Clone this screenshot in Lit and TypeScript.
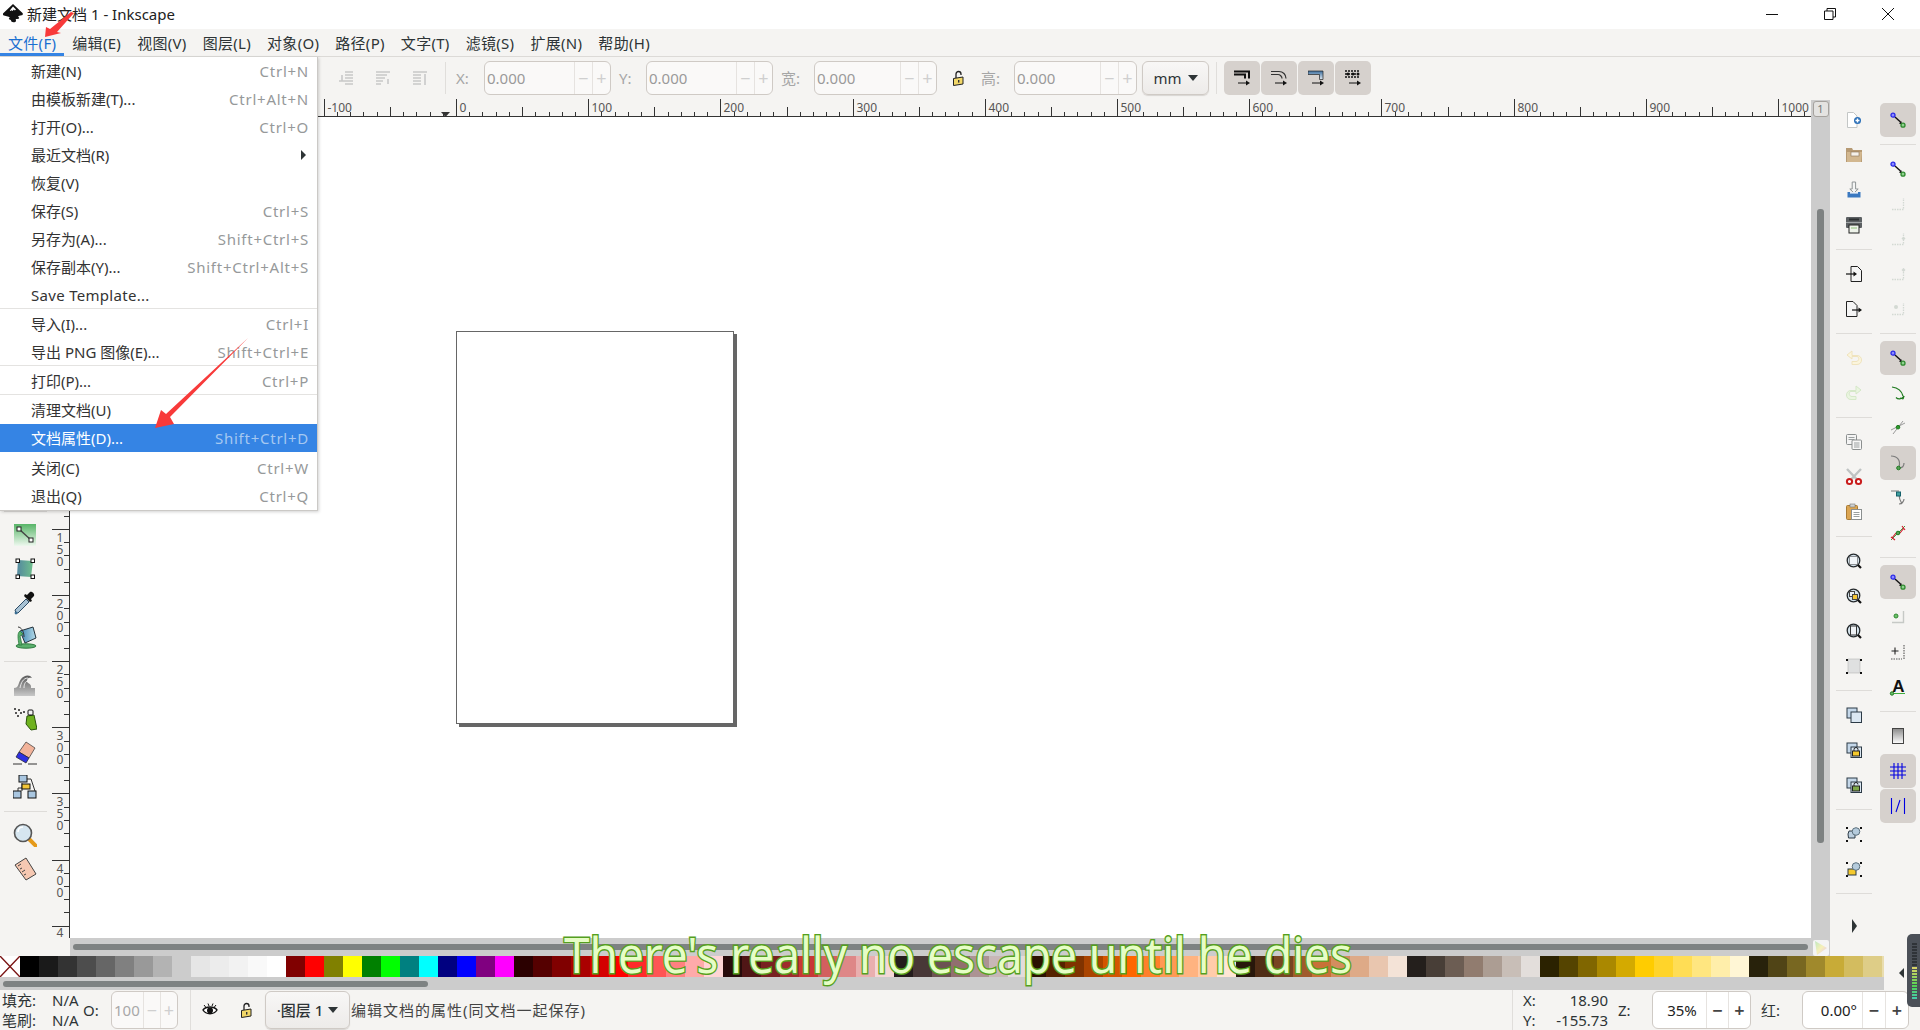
import { LitElement, html, svg, css, TemplateResult } from 'lit';
import { customElement } from 'lit/decorators.js';

const PALETTE = [
  '#000000', '#1a1a1a', '#333333', '#4d4d4d', '#666666', '#808080', '#999999', '#b3b3b3', '#cccccc', '#e6e6e6', '#ececec', '#f2f2f2', '#f9f9f9', '#ffffff',
  '#800000', '#ff0000', '#808000', '#ffff00', '#008000', '#00ff00', '#008080', '#00ffff', '#000080', '#0000ff', '#800080', '#ff00ff',
  '#2b0000', '#550000', '#800000', '#aa0000', '#d40000', '#ff0000', '#ff2a2a', '#ff5555', '#ff8080', '#ffaaaa', '#ffd5d5',
  '#280b0b', '#501616', '#782121', '#a02c2c', '#c83737', '#d35f5f', '#de8787', '#e9afaf', '#f4d7d7',
  '#241c1c', '#483737', '#6c5353', '#916f6f', '#ac9393', '#c8b7b7', '#e3dbdb',
  '#2b1100', '#552200', '#803300', '#aa4400', '#d45500', '#ff6600', '#ff7f2a', '#ff9955', '#ffb380', '#ffccaa', '#ffe6d5',
  '#28170b', '#502d16', '#784421', '#a05a2c', '#c87137', '#d38d5f', '#deaa87', '#e9c6af', '#f4e3d7',
  '#241f1c', '#483e37', '#6c5d53', '#917c6f', '#ac9d93', '#c8beb7', '#e3dedb',
  '#2b2200', '#554400', '#806600', '#aa8800', '#d4aa00', '#ffcc00', '#ffd42a', '#ffdd55', '#ffe680', '#ffeeaa', '#fff6d5',
  '#28220b', '#504416', '#786721', '#a0892c', '#c8ab37', '#d3bc5f', '#decd87', '#e9ddaf',
];

const MENUS = ['文件(F)', '编辑(E)', '视图(V)', '图层(L)', '对象(O)', '路径(P)', '文字(T)', '滤镜(S)', '扩展(N)', '帮助(H)'];

// '-' is a separator line, 'gap' a bit of white space, '>' as key draws the submenu arrow
const FILE_MENU: (string | [string, string])[] = [
  ['新建(N)', 'Ctrl+N'], ['由模板新建(T)...', 'Ctrl+Alt+N'], ['打开(O)...', 'Ctrl+O'], ['最近文档(R)', '>'], ['恢复(V)', ''],
  ['保存(S)', 'Ctrl+S'], ['另存为(A)...', 'Shift+Ctrl+S'], ['保存副本(Y)...', 'Shift+Ctrl+Alt+S'], ['Save Template...', ''], '-', 'gap',
  ['导入(I)...', 'Ctrl+I'], ['导出 PNG 图像(E)...', 'Shift+Ctrl+E'], '-',
  ['打印(P)...', 'Ctrl+P'], '-',
  ['清理文档(U)', ''], ['文档属性(D)...', 'Shift+Ctrl+D'], 'gap', ['关闭(C)', 'Ctrl+W'], ['退出(Q)', 'Ctrl+Q'],
];

const grad = (id: string, a: string, b: string, vertical = true) => svg`
  <linearGradient id=${id} x1="0" y1="0" x2=${vertical ? 0 : 1} y2=${vertical ? 1 : 0}>
    <stop offset="0" stop-color=${a}></stop><stop offset="1" stop-color=${b}></stop>
  </linearGradient>`;

const lockOpen = svg`
  <path d="M5 8V4a2.5 2.5 0 0 1 5 0v1" fill="none" stroke="#222" stroke-width="1.3"></path>
  <path d="M2.5 8.5l9.5-1.5v7l-9.5 1.5z" fill="#f2d768" stroke="#222" stroke-width="1"></path>
  <rect x="7" y="10" width="1.4" height="2.6" fill="#333"></rect>`;

const magnifier = (inner: TemplateResult) => svg`
  <circle cx="7.5" cy="7.5" r="6.3" fill="#d5e3ec" stroke="#23282b" stroke-width="1.3"></circle>
  ${inner}
  <path d="M12 12l3 3" stroke="#111" stroke-width="2.2"></path>`;

const stacked = (extra: TemplateResult | string = '') => svg`
  <rect x="1" y="1" width="10" height="10" fill="#c5d8ea" stroke="#2c3a46"></rect>
  <rect x="5" y="5" width="10.5" height="10.5" fill="#dbe7f2" stroke="#2c3a46"></rect>
  ${extra}`;

const handles = svg`
  <g fill="#111">
    <rect x="0" y="1" width="2" height="2"></rect><rect x="14" y="1" width="2" height="2"></rect>
    <rect x="0" y="14" width="2" height="2"></rect><rect x="14" y="14" width="2" height="2"></rect>
  </g>`;

const snapLine = svg`
  <path d="M2 13.5h11.5V2" fill="none" stroke="#d3d9d3" stroke-width="1.3" stroke-dasharray="1.5 1"></path>`;

const ICONS: Record<string, TemplateResult> = {
  // file commands
  new: svg`<path d="M1.5.5h6l3.5 3.5v11.5H1.5z" fill="#fff" stroke="#c3c6c6"></path><circle cx="11.5" cy="8.5" r="3.5" fill="#2a6fb8"></circle><path d="M9.5 8.5h4M11.5 6.5v4" stroke="#fff" stroke-width="1.4"></path>`,
  open: svg`<path d="M0 1h6l1 2h9v12H0z" fill="#b69a74"></path><path d="M1 5h15l-1 10H1z" fill="#d2b78f"></path><rect x="5" y="5" width="8" height="4" fill="#f5f1ea" stroke="#8a7458" stroke-width=".6"></rect>`,
  save: svg`<path d="M6.2 0h3.4v7h2.6L8 11 3.8 7h2.4z" fill="#f4f5f5" stroke="#8f9496"></path><rect x="1.5" y="10" width="13" height="5.5" fill="#3a78c0"></rect><rect x="4" y="10" width="8" height="1.6" fill="#e6edf5"></rect>`,
  print: svg`<rect x="0" y="0" width="16" height="11" rx="1" fill="#5c6063"></rect><rect x="3" y="1.5" width="10" height="2" fill="#2d3032"></rect><rect x="0" y="5" width="16" height="1" fill="#9ea2a4"></rect><rect x="3" y="8" width="10" height="8" fill="#eef3ea" stroke="#222"></rect><path d="M5 11h6" stroke="#8fbf7a"></path>`,
  import: svg`<path d="M5 .5h6.5l4 4v11H5z" fill="#f5f5f5" stroke="#222"></path><path d="M0 8h9" stroke="#111" stroke-width="1.2"></path><path d="M7.5 5.5L11 8l-3.5 2.5z" fill="#111"></path>`,
  export: svg`<path d="M.5.5h6.5l4 4v11H.5z" fill="#f5f5f5" stroke="#222"></path><path d="M6 9h8" stroke="#111" stroke-width="1.2"></path><path d="M12.5 6.5L16 9l-3.5 2.5z" fill="#111"></path>`,
  undo: svg`<path d="M6 1L1 5l5 4V6.5h5c2.5 0 2.5 5-1 5H6v3h5c6 0 6-9 0-9H6z" fill="#fbf5dd" stroke="#efe3bd"></path>`,
  redo: svg`<path d="M10 1l5 4-5 4V6.5H5c-2.5 0-2.5 5 1 5h4v3H5c-6 0-6-9 0-9h5z" fill="#eaf5e0" stroke="#d5e8c8"></path>`,
  copy: svg`<rect x=".5" y=".5" width="10" height="10" rx="1" fill="#f4f4f4" stroke="#8b8f8f"></rect><path d="M2.5 3.5h6M2.5 5.5h6" stroke="#9ba0a0"></path><rect x="6" y="6" width="9.5" height="9.5" rx="1" fill="#f7f7f7" stroke="#8b8f8f"></rect><path d="M8 9h5.5M8 11h5.5M8 13h5.5" stroke="#9ba0a0"></path>`,
  cut: svg`<path d="M1 0l9.5 10M15 0L5.5 10" stroke="#bfc3c3" stroke-width="2.4"></path><circle cx="3.5" cy="12.5" r="2.6" fill="#fff" stroke="#c91c1c" stroke-width="2"></circle><circle cx="12.5" cy="12.5" r="2.6" fill="#fff" stroke="#c91c1c" stroke-width="2"></circle>`,
  paste: svg`<rect x=".5" y="1.5" width="11" height="14" rx="1" fill="#dba552" stroke="#a97a34"></rect><rect x="5.5" y="5.5" width="10" height="10" fill="#fff" stroke="#8b8f8f"></rect><path d="M7.5 8.5h6M7.5 10.5h6M7.5 12.5h6" stroke="#9ba0a0"></path><rect x="4" y="0" width="5" height="3" fill="#d0d3d3" stroke="#777" stroke-width=".6"></rect>`,
  zoomSel: svg`${magnifier(svg`<rect x="3.5" y="3.5" width="8" height="8" fill="#f2f6f9" stroke="#333" stroke-dasharray="1 1"></rect>`)}`,
  zoomDraw: svg`${magnifier(svg`<rect x="3.5" y="3.5" width="5" height="5" fill="#e7eef4" stroke="#444"></rect><rect x="6.5" y="6.5" width="5" height="5" fill="#f3c638" stroke="#444"></rect>`)}`,
  zoomPage: svg`${magnifier(svg`<rect x="4.5" y="3" width="6" height="9" fill="#eef2f5" stroke="#333"></rect>`)}`,
  zoomWidth: svg`<rect x="2" y="1" width="12" height="14" fill="#dfe0e0" stroke="#aaa" stroke-width=".5"></rect>${handles}`,
  dup: svg`${stacked()}`,
  clone: svg`${stacked(svg`<rect x="6.5" y="9" width="7" height="5" fill="#f5c92d" stroke="#222"></rect><path d="M8 9V7.5a2 2 0 0 1 4 0V9" fill="none" stroke="#222"></path>`)}`,
  unclone: svg`${stacked(svg`<rect x="6.5" y="9" width="7" height="5" fill="#7ea84a" stroke="#222"></rect><path d="M8 9V7.5a2 2 0 0 1 4 0" fill="none" stroke="#222"></path>`)}`,
  group: svg`${handles}<path d="M2 8l1-3h6v7H2.5z" fill="#bdd0e0" stroke="#2c3a46"></path><circle cx="10" cy="5.5" r="3.8" fill="#b5cbdc" stroke="#5b6f7c"></circle>`,
  ungroup: svg`${handles}<rect x="2" y="8" width="8" height="6" fill="#f5c92d" stroke="#2c3a46"></rect><circle cx="10" cy="5.5" r="3.8" fill="#b5cbdc" stroke="#5b6f7c"></circle>`,

  // snapping bar
  snap: svg`<path d="M5 5l5.5 5" stroke="#111" stroke-width="1.4"></path><path d="M9 11.5l3.2 1-1-3.4z" fill="#111"></path><circle cx="3" cy="3.2" r="2" fill="#8a8aff" stroke="#2a2ae8" stroke-width="1.3"></circle><circle cx="13" cy="13.2" r="2" fill="#8fd08f" stroke="#2f8a2f" stroke-width="1.3"></circle>`,
  snapBox: svg`${snapLine}`,
  snapEdge: svg`${snapLine}<path d="M13.5 5.5l2 2-2 2-2-2z" fill="#d3d9d3"></path>`,
  snapEdgeMid: svg`${snapLine}<path d="M13.5 2l2 2-2 2-2-2z" fill="#d3d9d3"></path>`,
  snapCenter: svg`${snapLine}<circle cx="6" cy="6" r="2" fill="#d3d9d3"></circle>`,
  snapPath: svg`<path d="M2 2c7 1 10 5 11 9M6 12.5c2 2 6 2 8-1.5" fill="none" stroke="#1e7a1e" stroke-width="1.2"></path><path d="M13 14l-3-1M13 14l1-3" stroke="#1e7a1e" stroke-width="1.2"></path>`,
  snapCross: svg`<path d="M1 10L15 3M3 14L13 1" stroke="#9a9a9a" stroke-width="1"></path><circle cx="8" cy="7.2" r="1.8" fill="#2e9a2e" stroke="#1e7a1e"></circle>`,
  snapCurve: svg`<path d="M1 1c6 0 10 4 8 11M9 13c3 0 5-2 5-5" fill="none" stroke="#7c7c7c" stroke-width="1.2"></path><circle cx="8.5" cy="13" r="1.8" fill="#57a257" stroke="#1f7a1f"></circle>`,
  snapSmooth: svg`<path d="M1 1h8M9 4c0 5 1 7 3 10M9 14c3 0 5-3 5-5" fill="none" stroke="#7c7c7c" stroke-width="1.2"></path><rect x="6.5" y="2" width="4" height="4" fill="#3f9f9f" stroke="#14606a"></rect>`,
  snapMid: svg`<path d="M1 15L15 1" stroke="#3f9f3f" stroke-width="1"></path><path d="M1 12l4 3M12 1l3 4M2 13l4-5M10 8l4-5" stroke="#d21f2f" stroke-width="1.2"></path><circle cx="8" cy="8" r="1.8" fill="#57a257" stroke="#1f7a1f"></circle>`,
  snapObjMid: svg`<path d="M2 13.5h11.5V2" fill="none" stroke="#c6c9c6" stroke-width="1.4"></path><circle cx="6" cy="7" r="2" fill="#6cbf6c" stroke="#2f8a2f"></circle>`,
  snapRot: svg`<path d="M5 3.5v7M1.5 7h7" stroke="#222" stroke-width="1.1"></path><path d="M1 15h11M14 1v14" stroke="#555" stroke-width="1.1" stroke-dasharray="1.5 1"></path>`,
  snapText: svg`<text x="8.5" y="13" text-anchor="middle" font-family="Liberation Sans" font-weight="700" font-size="17" fill="#111">A</text><path d="M1 14.5h14" stroke="#3fae3f" stroke-width="1"></path><circle cx="2" cy="14.5" r="1.7" fill="#6cbf6c" stroke="#1f7a1f"></circle>`,
  snapPage: svg`<defs>${grad('pg', '#8a8a8a', '#fff')}</defs><rect x="2.5" y=".5" width="11" height="15" fill="url(#pg)" stroke="#444"></rect>`,
  snapGrid: svg`<path d="M0 4h16M0 8h16M0 12h16M4 0v16M8 0v16M12 0v16" stroke="#0000e0" stroke-width="1.1" fill="none"></path>`,
  snapGuide: svg`<path d="M1.5 0v16M14.5 0v16M6 14L10 2" stroke="#0000e0" stroke-width="1.1" fill="none"></path>`,

  // toolbox, 24px
  node: svg`<defs>${grad('nd', '#58b568', '#eef8ef')}</defs><rect x="1" y="1" width="22" height="22" fill="url(#nd)"></rect><path d="M6 6l12 11" stroke="#444" stroke-width="1.4"></path><rect x="4" y="4" width="4" height="4" fill="#fff" stroke="#222"></rect><rect x="16" y="15" width="4" height="4" fill="#fff" stroke="#222"></rect>`,
  bbox: svg`<defs>${grad('bb', '#5488a0', '#6fbf8c', false)}</defs><path d="M5 3l15 1-2 16-14-1z" fill="url(#bb)"></path><g fill="#fff" stroke="#111"><rect x="3" y="2" width="3.5" height="3.5"></rect><rect x="18" y="2" width="3.5" height="3.5"></rect><rect x="3" y="18" width="3.5" height="3.5"></rect><rect x="18" y="18" width="3.5" height="3.5"></rect></g>`,
  dropper: svg`<path d="M3 22l-1-3L13 8l3 3L5 22z" fill="#a8c2d4" stroke="#2d4c66"></path><path d="M14 4l3-3c2-1 5 2 4 4l-3 3 1 2-2 1-6-6 1-2z" fill="#111"></path><circle cx="3" cy="22" r="1.4" fill="#3a6d92"></circle>`,
  bucket: svg`<defs>${grad('bk', '#3f86b3', '#b7dcea', false)}</defs><ellipse cx="13" cy="21" rx="10" ry="2.2" fill="#5ab06d" stroke="#2d7a3e"></ellipse><path d="M7 6l13-4 3 11-11 5z" fill="url(#bk)" stroke="#24323c"></path><path d="M7 6c-3 2-2 8-1 14h3l-2-9 3-2z" fill="#5ab06d" stroke="#2d7a3e" stroke-width=".8"></path><path d="M5 2c3 0 6 4 6 10" stroke="#333" fill="none"></path>`,
  tweak: svg`<defs>${grad('tw', '#5b5b5b', '#c8c8c8')}</defs><path d="M1 15c5 0 4-5 7-9s9-5 11-1c-3-1-5 0-5 3 0 3 5 2 4 7h4v8H1z" fill="url(#tw)"></path><path d="M7 15c1-5 3-10 8-10M11 15c0-3 1-7 4-7" stroke="#fff" stroke-width=".8" fill="none"></path>`,
  spray: svg`<path d="M14 9l7-1 3 14-6 1-5-6z" fill="#6fb21f" stroke="#28530a"></path><rect x="15" y="3" width="5" height="5" rx="1" fill="#f4f4f4" stroke="#111"></rect><g fill="#222"><circle cx="2" cy="2" r="1"></circle><circle cx="6" cy="3" r="1"></circle><circle cx="3" cy="6" r="1"></circle><circle cx="8" cy="6" r="1"></circle><circle cx="5" cy="9" r="1"></circle><circle cx="11" cy="5" r="1"></circle></g>`,
  eraser: svg`<path d="M13 1l9 6-6 10-10-6z" fill="#f2b39a" stroke="#333" stroke-width=".7"></path><path d="M6 11l10 6-3 5-10-6z" fill="#2f2fe0" stroke="#222" stroke-width=".7"></path><path d="M0 23h9M15 23h9" stroke="#333"></path>`,
  connector: svg`<path d="M9 8v8M14 4h4l4 12M5 16v-3h4" stroke="#333" fill="none"></path><rect x="6" y="0" width="8" height="7" fill="#a9c6e0" stroke="#111"></rect><rect x="9" y="9" width="8" height="5" fill="#f3c638" stroke="#111"></rect><rect x="0" y="16" width="8" height="7" fill="#a9c6e0" stroke="#111"></rect><rect x="15" y="16" width="8" height="7" fill="#a9c6e0" stroke="#111"></rect>`,
  zoom: svg`<path d="M16 16l7 7" stroke="#e59a1a" stroke-width="4" stroke-linecap="round"></path><circle cx="10" cy="10" r="8.5" fill="#d6e6f0" stroke="#555" stroke-width="1.6"></circle><path d="M5 9c0-3 2-5 5-5" stroke="#fff" stroke-width="1.6" fill="none"></path>`,
  measure: svg`<path d="M2 8l11-7 10 16-10 6z" fill="#f6c8b2" stroke="#444"></path><path d="M5 9l3-2M7 12l2-1M9 15l3-2M11 18l2-1" stroke="#444"></path>`,

  // controls bar
  alignA: svg`<g stroke="#c8c8c8" stroke-width="1.6"><path d="M7 2h8M7 5h8M7 8h8M7 14h8M1 11h14"></path><path d="M4 5v6"></path></g>`,
  alignB: svg`<g stroke="#c8c8c8" stroke-width="1.6"><path d="M1 2h14M1 5h11M1 8h9M1 11h7M1 14h5"></path><path d="M13 9v5"></path></g>`,
  alignC: svg`<g stroke="#c8c8c8" stroke-width="1.6"><path d="M1 2h14M1 5h8M1 8h8M1 11h8M1 14h8"></path><path d="M13 4v11"></path></g>`,
  scaleA: svg`<path d="M0 1.5h15v7M0 4.5h11v4" fill="none" stroke="#111" stroke-width="2"></path><path d="M4 13h9" stroke="#111"></path><path d="M12 10.5l4 2.5-4 2.5z" fill="#111"></path>`,
  scaleB: svg`<path d="M0 1.5h8c4 0 7 3 7 7M0 4.5h7c2 0 4 2 4 4" fill="none" stroke="#333" stroke-width="1.2"></path><path d="M4 13h9" stroke="#111"></path><path d="M12 10.5l4 2.5-4 2.5z" fill="#111"></path>`,
  scaleC: svg`<defs>${grad('sc', '#3d6f9e', '#dfe9f2')}</defs><path d="M0 1h15v8.5h-3.5V4.5H0z" fill="url(#sc)" stroke="#222" stroke-width=".7"></path><path d="M4 13h9" stroke="#111"></path><path d="M12 10.5l4 2.5-4 2.5z" fill="#111"></path>`,
  scaleD: svg`<path d="M0 1h15M0 4h15M0 7h15" stroke="#111" stroke-dasharray="2 1" stroke-width="1.6"></path><g fill="#111"><circle cx="3" cy="4" r="1.5"></circle><circle cx="8" cy="4" r="1.5"></circle><circle cx="13" cy="4" r="1.5"></circle></g><path d="M4 13h9" stroke="#111"></path><path d="M12 10.5l4 2.5-4 2.5z" fill="#111"></path>`,
  lock: lockOpen,
  eye: svg`<path d="M1 8c3-4 11-4 14 0-3 5-11 5-14 0z" fill="#fff" stroke="#111" stroke-width="1.4"></path><circle cx="8" cy="8.5" r="3" fill="#111"></circle><path d="M2 3l2 2.5M6 1.5l1 2.5M11 1.5l-1 2.5M14 3l-2 2.5" stroke="#111"></path>`,
};

const icon = (name: string, size = 16) => html`
  <svg width=${size} height=${size} viewBox="0 0 ${size} ${size}" aria-hidden="true">${ICONS[name]}</svg>`;

const caret = html`<svg class="caret" width="10" height="6" viewBox="0 0 10 6"><path d="M0 0h10L5 6z" fill="#2e3436"></path></svg>`;

const COMMANDS = [
  ['new', 'open', 'save', 'print'], ['import', 'export'], ['undo', 'redo'], ['copy', 'cut', 'paste'],
  ['zoomSel', 'zoomDraw', 'zoomPage', 'zoomWidth'], ['dup', 'clone', 'unclone'], ['group', 'ungroup'],
];

// a leading * means toggled on
const SNAPS = [
  ['*snap'], ['snap', 'snapBox', 'snapEdge', 'snapEdgeMid', 'snapCenter'],
  ['*snap', 'snapPath', 'snapCross', '*snapCurve', 'snapSmooth', 'snapMid'],
  ['*snap', 'snapObjMid', 'snapRot', 'snapText'], ['snapPage', '*snapGrid', '*snapGuide'],
];

const TOOLS = [['node', 'bbox', 'dropper', 'bucket'], ['tweak', 'spray', 'eraser', 'connector'], ['zoom', 'measure']];

const UNIT = 13.22;

@customElement('app-root')
export class AppRoot extends LitElement {
  static styles = css`
    :host {
      display: block;
      position: relative;
      width: 1920px;
      height: 1030px;
      overflow: hidden;
      background: #f5f4f2;
      color: #2e3436;
      font: 15px/20px "Noto Sans", "Noto Sans CJK SC", sans-serif;
    }
    svg { display: block; }

    .titlebar { display: flex; align-items: center; height: 29px; background: #fff; padding: 0 3px 2px; box-sizing: border-box; color: #222; }
    .titlebar .name { margin-left: 4px; flex: 1; }
    .win { width: 58px; display: flex; justify-content: center; }

    .menubar { display: flex; height: 28px; box-sizing: border-box; border-bottom: 1px solid #dcdad7; background: #f5f4f2; }
    .menubar span { padding: 0 8px; line-height: 28px; white-space: nowrap; letter-spacing: .3px; }
    .menubar .on { color: #1a6fd0; box-shadow: inset 0 -3px 0 #3584e4; }

    .top { display: flex; height: 899px; }
    .work { width: 1830px; display: flex; flex-direction: column; }
    .controls { height: 41px; display: flex; align-items: center; padding-left: 327px; box-sizing: border-box; }
    .controls .slot { width: 37px; display: flex; justify-content: center; }
    .vsep { width: 1px; height: 32px; background: #e0dedb; margin: 0 7px; }
    .lbl { color: #a6a6a6; }
    .lx { margin-left: 3px; width: 28px; }
    .ly { margin-left: 8px; width: 27px; }
    .lw { width: 33px; }
    .lw.first { margin-left: 8px; }
    .lockslot { width: 44px; display: flex; justify-content: center; }

    .spin { display: flex; box-sizing: border-box; height: 34px; border: 1px solid #cfcac5; border-radius: 6px; background: #faf9f8; color: #9a9a9a; line-height: 32px; }
    .spin .val { flex: 1; padding-left: 2px; overflow: hidden; }
    .spin i { font-style: normal; border-left: 1px solid #e6e3e0; text-align: center; font-size: 18px; color: #cfcfcf; }
    .spin.w127 { width: 127px; }
    .spin.w123 { width: 123px; }
    .spin.w127 i, .spin.w123 i { width: 17px; }

    .drop { display: flex; align-items: center; justify-content: center; gap: 6px; box-sizing: border-box; border: 1px solid #cfcac5; border-radius: 6px; background: linear-gradient(#f8f7f6, #edebe9); box-shadow: 0 1px 1px #d8d5d2; }
    .unit { width: 67px; height: 34px; margin-left: 5px; }
    .unit + .vsep { margin-right: 7px; }
    .scalers { display: flex; gap: 1px; }
    .scalers span { width: 36px; height: 34px; border-radius: 5px; background: #d6d1cd; display: flex; align-items: center; justify-content: center; }

    .body { flex: 1; display: flex; min-height: 0; }
    .toolbox { width: 52px; padding: 406px 2px 0 0; box-sizing: border-box; }
    .toolbox .sep { height: 14px; display: flex; align-items: center; justify-content: center; }
    .toolbox .sep::after { content: ""; width: 43px; height: 1px; background: #dedcd9; }
    .toolbox .tool { height: 34px; display: flex; align-items: center; justify-content: center; }
    .vruler { width: 18px; height: 821px; margin-top: 19px; }

    .stage { width: 1760px; display: grid; grid-template-columns: 1741px 19px; grid-template-rows: 19px 821px 18px; }
    .canvas { position: relative; background: #fff; }
    .page { position: absolute; left: 386px; top: 214px; width: 278px; height: 393px; box-sizing: border-box; border: 1px solid #666; background: #fff; box-shadow: 3px 3px 0 #666; }
    .corner { background: #ccc; display: flex; justify-content: center; align-items: flex-end; }
    .corner.first { background: linear-gradient(#f5f4f2 2px, #ccc 2px); }
    .guidebtn { width: 16px; height: 16px; box-sizing: border-box; border: 1px solid #a5a29e; border-radius: 3px; background: #e4e3e1; font-size: 11px; line-height: 14px; text-align: center; color: #777; }
    .vscroll { background: #ccc; padding: 92px 6px 95px 6px; display: flex; }
    .hscroll { background: #ccc; padding: 6px 3px 6px 3px; display: flex; }
    .thumb { flex: 1; background: #7e8282; border-radius: 3px; }

    .col { display: flex; flex-direction: column; gap: 1px; }
    .cmds { width: 48px; padding-top: 46px; box-sizing: border-box; align-items: center; }
    .cmds .hline, .snaps .hline { height: 13px; display: flex; align-items: center; width: 36px; }
    .hline::after { content: ""; width: 100%; height: 1px; background: #dedcd9; }
    .btn { width: 36px; height: 34px; display: flex; align-items: center; justify-content: center; border-radius: 5px; flex: none; }
    .btn svg { overflow: visible; }
    .btn.on { background: #d6d1cd; }
    .more { margin-top: 18px; }
    .snaps { width: 42px; padding: 46px 0 0 2px; box-sizing: border-box; }

    .bottom { display: flex; height: 34px; }
    .palette { width: 1884px; overflow: hidden; }
    .swatches { display: flex; height: 21px; }
    .swatches span { flex: none; width: 19px; }
    .nocolor { flex: none; width: 19.6px; background: #fff; }
    .pscroll { height: 13px; background: #ccc; padding: 4px 1456px 3px 3px; box-sizing: border-box; display: flex; }
    .parrow { flex: 1; display: flex; justify-content: center; padding-top: 12px; box-sizing: border-box; padding-right: 2px; }

    .status { display: flex; height: 40px; align-items: center; white-space: nowrap; }
    .pair { display: grid; line-height: 20px; }
    .fs { width: 83px; padding-left: 2px; box-sizing: border-box; grid-template-columns: 50px 1fr; }
    .op { width: 28px; }
    .spin.tall { height: 38px; line-height: 36px; }
    .spin.o { width: 67px; color: #a8a8a8; }
    .spin.o i { width: 16px; }
    .status .vsep { height: 40px; margin: 0 0 0 12px; }
    .sbtn { width: 37px; display: flex; justify-content: center; }
    .layer { width: 85px; height: 38px; gap: 5px; font-weight: 500; }
    .msg { margin-left: 1px; flex: 1; letter-spacing: 1px; color: #444; }
    .right { display: flex; align-items: center; height: 40px; padding-right: 11px; }
    .right .line { width: 1px; height: 40px; background: #e0dedb; margin-right: 10px; }
    .coords { width: 85px; grid-template-columns: 1fr auto; margin-right: 10px; }
    .coords b { font-weight: 400; text-align: right; }
    .zl { width: 34px; }
    .rl { width: 41px; margin-left: 10px; }
    .spin.live { background: #fff; color: #222; }
    .spin.live i { color: #444; font-weight: 600; }
    .spin.z { width: 99px; }
    .spin.z .val { text-align: center; padding-left: 5px; }
    .spin.z i { width: 21px; }
    .spin.a { width: 107px; }
    .spin.a .val { text-align: right; padding-right: 5px; }
    .spin.a i { width: 22px; }

    .menu { position: absolute; left: 0; top: 57px; width: 318px; height: 454px; box-sizing: border-box; background: #fff; border-right: 1px solid #cbc9c6; border-bottom: 1px solid #cbc9c6; box-shadow: 1px 1px 3px rgba(0, 0, 0, .18); }
    .item { display: flex; justify-content: space-between; align-items: center; height: 28px; padding: 0 8px 0 31px; color: #333; white-space: nowrap; }
    .item .latin { letter-spacing: .3px; }
    .item .key { color: #96999a; letter-spacing: .75px; }
    .item.hot { background: #3584e4; color: #fff; }
    .item.hot .key { color: #a5c8f1; }
    .divider { height: 1px; margin-top: -1px; background: #e4e3e1; }
    .divider + .item { margin-top: 1px; }
    .gap { height: 1px; }
    .hot + .gap { height: 2px; }
    .sub { margin-right: 3px; }

    .overlay { position: absolute; left: 0; top: 0; pointer-events: none; }
    .caption { font: 400 50px "Noto Sans", sans-serif; fill: #e6fdc6; stroke: #55a01f; stroke-width: 2.8px; paint-order: stroke fill; }

    .meter { position: absolute; left: 1907px; top: 934px; width: 13px; height: 73px; box-sizing: border-box; padding: 9px 3px 0 5px; background: #4b5058; border-radius: 5px 0 0 5px; display: flex; flex-direction: column; gap: 1px; }
    .meter span { height: 2px; flex: none; }
  `;

  private spin(value: string, cls: string) {
    return html`<div class="spin ${cls}"><span class="val">${value}</span><i>−</i><i>+</i></div>`;
  }

  private hruler() {
    const parts = [];
    for (let i = -19; i <= 102; i++) {
      const x = Math.round(386 + i * UNIT) + 0.5;
      const top = i % 10 === 0 ? 1 : i % 5 === 0 ? 9 : 14;
      parts.push(svg`<line x1=${x} x2=${x} y1=${top} y2="18" stroke="#333"></line>`);
      if (i % 10 === 0) {
        parts.push(svg`<text x=${x + 3} y="14" font-size="12" fill="#555">${i * 10}</text>`);
      }
    }
    return html`<svg width="1741" height="19">
      ${parts}
      <line x1="0" x2="1741" y1="18.5" y2="18.5" stroke="#333"></line>
      <path d="M371 14h9l-4.5 5z" fill="#333"></path>
    </svg>`;
  }

  private vruler() {
    const parts = [];
    // everything above 150 sits under the open menu
    for (let i = 13; i <= 46; i++) {
      const y = Math.round(213.7 + i * UNIT) + 0.5;
      const left = i % 5 === 0 ? 0 : 12;
      parts.push(svg`<line x1=${left} x2="17" y1=${y} y2=${y} stroke="#333"></line>`);
      if (i % 5 === 0) {
        [...String(i * 10)].forEach((digit, n) => {
          const base = y + 12 + n * 12;
          if (base < 830) parts.push(svg`<text x="8" y=${Math.min(base, 820)} text-anchor="middle" font-size="12" fill="#555">${digit}</text>`);
        });
      }
    }
    return html`<svg class="vruler" width="18" height="821">${parts}<line x1="17.5" x2="17.5" y1="0" y2="821" stroke="#333"></line></svg>`;
  }

  private renderMenu() {
    return html`<div class="menu">
      ${FILE_MENU.map((entry) => {
        if (entry === '-') return html`<div class="divider"></div>`;
        if (entry === 'gap') return html`<div class="gap"></div>`;
        const [label, key] = entry as [string, string];
        return html`<div class="item ${label.startsWith('文档属性') ? 'hot' : ''}">
          <span class=${label.startsWith('Save') ? 'latin' : ''}>${label}</span>
          ${key === '>'
            ? html`<svg class="sub" width="5" height="10" viewBox="0 0 5 10"><path d="M0 0l5 5-5 5z" fill="#2e3436"></path></svg>`
            : html`<span class="key">${key}</span>`}
        </div>`;
      })}
    </div>`;
  }

  private renderMeter() {
    const leds = Array.from({ length: 19 }, (_, i) => {
      if (i < 8) return '#2f3338';
      const t = (i - 8) / 10;
      return `hsl(${Math.round(58 + t * 105)}, 58%, ${Math.round(62 - t * 8)}%)`;
    });
    return html`<div class="meter">${leds.map((c) => html`<span style="background:${c}"></span>`)}</div>`;
  }

  render() {
    return html`
      <div class="titlebar">
        <svg width="20" height="20" viewBox="0 0 20 20">
          <path d="M10 0l9.5 9c.8 1 .3 2-1 2.3l-3 .7c-.7.4 0 1 .5 1.5.6.8-.2 1.4-1.5 1.4l-1.5.2c-.5.4 0 1 0 1.6 0 1-1.2 1.6-2.6 1.6-1.4 0-2.5-.6-2.3-1.7.1-.7-.6-1-1.4-1.2-1.2-.3-1-1-.3-1.5.5-.5 0-1-.8-1.2l-3.6-.9C-.3 11.3-.6 10 .5 9z" fill="#111"></path>
          <path d="M10 2.5l3 3-1.2 1-1-1-1.3 1.6-.9-.8-1.4.8-.4-.5z" fill="#fff"></path>
        </svg>
        <span class="name">新建文档 1 - Inkscape</span>
        <span class="win"><svg width="12" height="12" viewBox="0 0 12 12"><path d="M0 6.5h12" stroke="#111"></path></svg></span>
        <span class="win"><svg width="12" height="12" viewBox="0 0 12 12"><path d="M.5 3h8.5v8.5H.5zM3 3V.5h8.5V9H9" fill="none" stroke="#111"></path></svg></span>
        <span class="win"><svg width="12" height="12" viewBox="0 0 12 12"><path d="M0 0l12 12M12 0L0 12" stroke="#111"></path></svg></span>
      </div>

      <div class="menubar">${MENUS.map((m, i) => html`<span class=${i === 0 ? 'on' : ''}>${m}</span>`)}</div>

      <div class="top">
        <div class="work">
          <div class="controls">
            <span class="slot">${icon('alignA')}</span>
            <span class="slot">${icon('alignB')}</span>
            <span class="slot">${icon('alignC')}</span>
            <span class="vsep"></span>
            <span class="lbl lx">X:</span>${this.spin('0.000', 'w127')}
            <span class="lbl ly">Y:</span>${this.spin('0.000', 'w127')}
            <span class="lbl lw first">宽:</span>${this.spin('0.000', 'w123')}
            <span class="lockslot">${icon('lock')}</span>
            <span class="lbl lw">高:</span>${this.spin('0.000', 'w123')}
            <div class="drop unit">mm ${caret}</div>
            <span class="vsep"></span>
            <div class="scalers">
              ${['scaleA', 'scaleB', 'scaleC', 'scaleD'].map((n) => html`<span>${icon(n)}</span>`)}
            </div>
          </div>

          <div class="body">
            <div class="toolbox">
              ${TOOLS.map((group) => html`
                <div class="sep"></div>
                ${group.map((n) => html`<div class="tool">${icon(n, 24)}</div>`)}
              `)}
            </div>
            ${this.vruler()}
            <div class="stage">
              ${this.hruler()}
              <div class="corner first"><div class="guidebtn">1</div></div>
              <div class="canvas"><div class="page"></div></div>
              <div class="vscroll"><div class="thumb"></div></div>
              <div class="hscroll"><div class="thumb"></div></div>
              <div class="corner">
                <svg class="wheel" width="16" height="16" viewBox="0 0 16 16">
                  <defs>
                    <linearGradient id="tri" x1="0" y1="0" x2="1" y2="1">
                      <stop offset="0" stop-color="#bfe8c0"></stop><stop offset=".5" stop-color="#f6f0b8"></stop><stop offset="1" stop-color="#e6c0f0"></stop>
                    </linearGradient>
                  </defs>
                  <rect width="16" height="16" rx="2" fill="#f4f4f4"></rect>
                  <path d="M2 1l12 7-10 7z" fill="url(#tri)"></path>
                </svg>
              </div>
            </div>
          </div>
        </div>

        <div class="col cmds">
          ${COMMANDS.map((group, i) => html`
            ${i > 0 ? html`<div class="hline"></div>` : ''}
            ${group.map((n) => html`<div class="btn">${icon(n)}</div>`)}
          `)}
          <div class="hline"></div>
          <div class="more"><svg width="5" height="14" viewBox="0 0 5 14"><path d="M0 0l5 7-5 7z" fill="#2e3436"></path></svg></div>
        </div>

        <div class="col snaps">
          ${SNAPS.map((group, i) => html`
            ${i > 0 ? html`<div class="hline"></div>` : ''}
            ${group.map((n) => html`<div class="btn ${n[0] === '*' ? 'on' : ''}">${icon(n.replace('*', ''))}</div>`)}
          `)}
        </div>
      </div>

      <div class="bottom">
        <div class="palette">
          <div class="swatches">
            <div class="nocolor"><svg width="20" height="21" viewBox="0 0 20 21"><path d="M0 0l20 21M20 0L0 21" stroke="#7a1414" stroke-width="1.4"></path></svg></div>
            ${PALETTE.map((c) => html`<span style="background:${c}"></span>`)}
          </div>
          <div class="pscroll"><div class="thumb"></div></div>
        </div>
        <div class="parrow"><svg width="5" height="10" viewBox="0 0 5 10"><path d="M5 0L0 5l5 5z" fill="#2e3436"></path></svg></div>
      </div>

      <div class="status">
        <div class="pair fs"><span>填充:</span><span>N/A</span><span>笔刷:</span><span>N/A</span></div>
        <span class="op">O:</span>
        ${this.spin('100', 'tall o')}
        <span class="vsep"></span>
        <span class="sbtn">${icon('eye')}</span>
        <span class="sbtn">${icon('lock')}</span>
        <div class="drop layer">·图层 1 ${caret}</div>
        <span class="msg">编辑文档的属性(同文档一起保存)</span>
        <div class="right">
          <span class="line"></span>
          <div class="pair coords"><span>X:</span><b>18.90</b><span>Y:</span><b>-155.73</b></div>
          <span class="zl">Z:</span>
          ${this.spin('35%', 'tall live z')}
          <span class="rl">红:</span>
          ${this.spin('0.00°', 'tall live a')}
        </div>
      </div>

      ${this.renderMenu()}
      ${this.renderMeter()}

      <svg class="overlay" width="1920" height="1030">
        <path d="M74 13L57 32l4 1-16 4 1-10 4 2 21-17z" fill="#f83a3a"></path>
        <path d="M248 338l-78 79 4 7-19 4 6-18 5 4z" fill="#f83a3a"></path>
        <text class="caption" x="564" y="973" textLength="788" lengthAdjust="spacingAndGlyphs">There's really no escape until he dies</text>
      </svg>
    `;
  }
}
